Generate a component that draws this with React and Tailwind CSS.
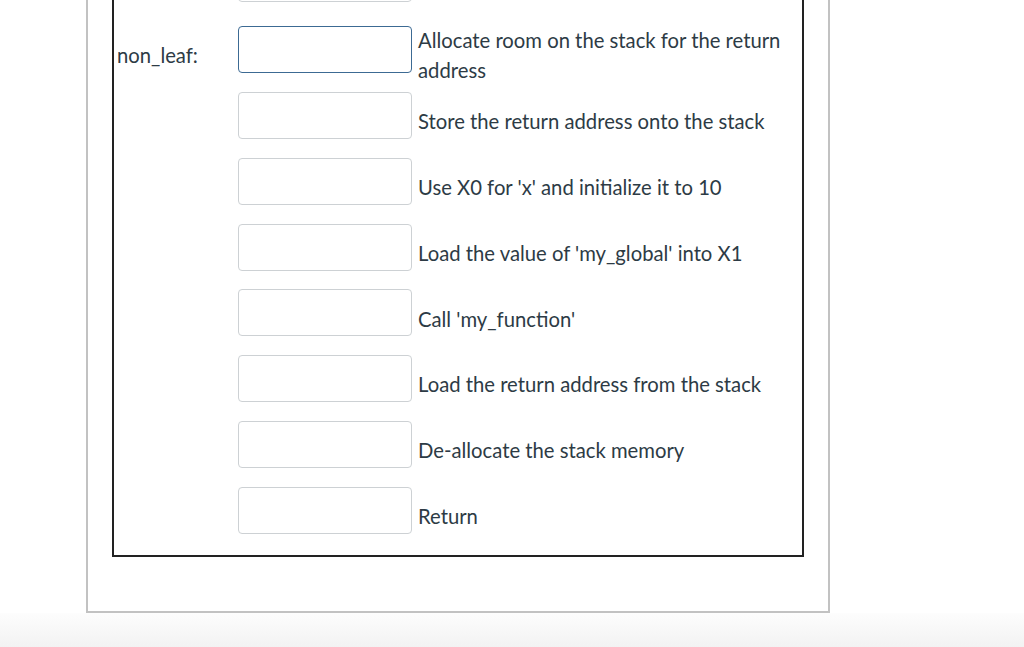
import React from 'react';

const steps = [
  { label: 'non_leaf:', text: 'Allocate room on the stack for the return address', focused: true },
  { text: 'Store the return address onto the stack' },
  { text: "Use X0 for 'x' and initialize it to 10" },
  { text: "Load the value of 'my_global' into X1" },
  { text: "Call 'my_function'" },
  { text: 'Load the return address from the stack' },
  { text: 'De-allocate the stack memory' },
  { text: 'Return' },
];

function Blank({ focused }) {
  return (
    <input
      type="text"
      className={
        'w-[174px] h-[47px] mb-[15px] shrink-0 rounded-[4px] bg-white outline-none ' +
        (focused ? 'border border-[#3c6a93]' : 'border border-[#cdd1d4]')
      }
    />
  );
}

function Row({ label, text, focused }) {
  return (
    <div className="flex items-center h-[65.86px]">
      <div className="w-[124px] shrink-0 pl-[3px] mb-[2px] leading-[29.5px]">{label}</div>
      <Blank focused={focused} />
      <div className="pl-[6px] pr-4 mb-[2px] leading-[29.5px]">{text}</div>
    </div>
  );
}

export default function App() {
  return (
    <div
      className="h-[647px] overflow-hidden bg-white text-[#2d3b45] text-[20.25px]"
      style={{ fontFamily: 'Lato, "Noto Sans", sans-serif' }}
    >
      <div className="ml-[86px] w-[744px] border-x-2 border-b-2 border-[#c2c2c2] pl-[24px] pb-[54px]">
        <div className="-mt-[47px] w-[692px] border-x-2 border-b-2 border-[#222] pb-[4px]">
          {/* row above, scrolled off */}
          <div className="flex items-center h-[66px] mb-[5px]">
            <div className="w-[124px] shrink-0" />
            <Blank />
          </div>
          {steps.map((s, i) => (
            <Row key={i} {...s} />
          ))}
        </div>
      </div>
      <div className="h-[35px] bg-linear-to-b from-[#fdfdfd] to-[#f2f2f2]" />
    </div>
  );
}
